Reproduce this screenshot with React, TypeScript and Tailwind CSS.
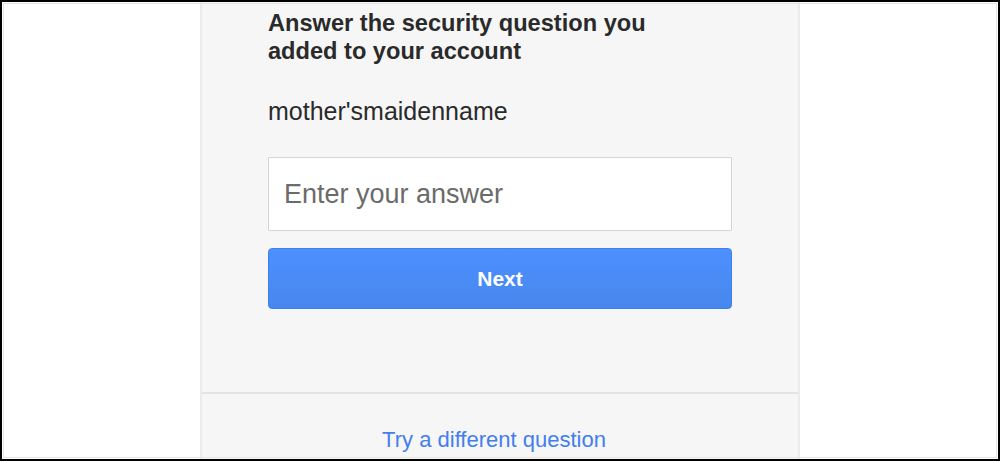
import React from 'react';

const font = { fontFamily: '"Liberation Sans", Arial, sans-serif' };

export default function App() {
  return (
    <div
      className="relative h-[461px] w-[1000px] overflow-hidden border-2 border-black bg-white"
      style={font}
    >
      <div className="mx-auto flex h-full w-[600px] flex-col border-x-2 border-[#ebebeb] bg-[#f6f6f6]">
        <div className="px-[66px] pt-[7px]">
          <h1 className="text-[23.6px] font-bold leading-[28px] text-[#2a2a2a]">
            Answer the security question you
            <br />
            added to your account
          </h1>
          <p className="mt-[31px] text-[25px] leading-[30px] text-[#2a2a2a]">
            mother'smaidenname
          </p>
          <input
            type="text"
            placeholder="Enter your answer"
            className="mt-[31px] block h-[74px] w-full rounded-[1px] border border-[#d4d4d4] bg-white px-[15px] text-[27px] text-[#333] outline-none placeholder:text-[#6b6b6b]"
          />
          <button
            type="button"
            className="mt-[17px] flex h-[61px] w-full items-center justify-center rounded-[4px] border border-[#3b82ef] bg-gradient-to-b from-[#4d90fe] to-[#4787ed] text-[21px] font-bold text-white"
          >
            Next
          </button>
        </div>
        <div className="mt-[83px] border-t-2 border-[#e3e3e3] pt-[33px] pr-[12px] text-center">
          <a href="#" className="text-[22px] leading-[26px] text-[#427fed]">
            Try a different question
          </a>
        </div>
      </div>
      <div className="pointer-events-none absolute inset-[1px] border border-[#e6e6e6]" />
    </div>
  );
}
